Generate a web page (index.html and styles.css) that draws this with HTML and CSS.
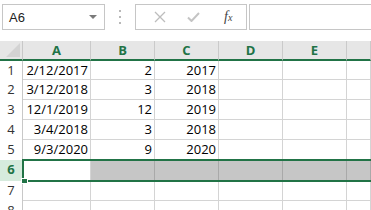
FILE: index.html
```html
<!DOCTYPE html>
<html lang="en">
<head>
    <meta charset="UTF-8">
    <title>Sheet</title>
    <link rel="stylesheet" href="styles.css">
</head>
<body>
    <div class="toolbar">
        <div class="name-box">
            <span>A6</span>
            <span class="caret"></span>
        </div>
        <div class="grip"><i></i><i></i><i></i></div>
        <div class="fx-buttons">
            <svg class="btn-icon" width="12" height="12" viewBox="0 0 12 12">
                <path d="M1 1 L11 11 M11 1 L1 11" stroke="#bdbdbd" stroke-width="1.3" fill="none"/>
            </svg>
            <svg class="btn-icon" width="13" height="10" viewBox="0 0 13 10">
                <path d="M1 5.5 L4.5 9 L12 1" stroke="#c4c4c4" stroke-width="2" fill="none"/>
            </svg>
            <span class="fx">f<small>x</small></span>
        </div>
        <div class="formula"></div>
    </div>

    <div class="sheet">
        <div class="corner"><span class="corner-tri"></span></div>
        <div class="col-head">A</div>
        <div class="col-head">B</div>
        <div class="col-head">C</div>
        <div class="col-head">D</div>
        <div class="col-head">E</div>
        <div class="col-head"></div>

        <div class="row-head">1</div>
        <div class="cell">2/12/2017</div><div class="cell">2</div><div class="cell">2017</div><div class="cell"></div><div class="cell"></div><div class="cell"></div>

        <div class="row-head">2</div>
        <div class="cell">3/12/2018</div><div class="cell">3</div><div class="cell">2018</div><div class="cell"></div><div class="cell"></div><div class="cell"></div>

        <div class="row-head">3</div>
        <div class="cell">12/1/2019</div><div class="cell">12</div><div class="cell">2019</div><div class="cell"></div><div class="cell"></div><div class="cell"></div>

        <div class="row-head">4</div>
        <div class="cell">3/4/2018</div><div class="cell">3</div><div class="cell">2018</div><div class="cell"></div><div class="cell"></div><div class="cell"></div>

        <div class="row-head">5</div>
        <div class="cell">9/3/2020</div><div class="cell">9</div><div class="cell">2020</div><div class="cell"></div><div class="cell"></div><div class="cell"></div>

        <div class="row-head active">6</div>
        <div class="cell"></div><div class="cell picked"></div><div class="cell picked"></div><div class="cell picked"></div><div class="cell picked"></div><div class="cell picked"></div>

        <div class="row-head">7</div>
        <div class="cell"></div><div class="cell"></div><div class="cell"></div><div class="cell"></div><div class="cell"></div><div class="cell"></div>

        <div class="row-head">8</div>
        <div class="cell"></div><div class="cell"></div><div class="cell"></div><div class="cell"></div><div class="cell"></div><div class="cell"></div>

        <div class="selection"><span class="handle"></span></div>
    </div>
</body>
</html>
```

FILE: styles.css
```css
* {
    margin: 0;
    padding: 0;
    box-sizing: border-box;
}

body {
    background: #ffffff;
    font-family: "Open Sans", "Liberation Sans", sans-serif;
    overflow: hidden;
    width: 371px;
    height: 210px;
}

/* formula bar */

.toolbar {
    height: 41px;
    display: flex;
    align-items: flex-start;
    padding: 4px 0 0 2px;
}

.name-box {
    width: 103px;
    height: 26px;
    border: 1px solid #c6c6c6;
    display: flex;
    align-items: center;
    justify-content: space-between;
    padding: 0 7px 0 6px;
    font-family: "Liberation Sans", sans-serif;
    font-size: 13px;
    color: #222;
}

.caret {
    width: 0;
    height: 0;
    border-left: 4px solid transparent;
    border-right: 4px solid transparent;
    border-top: 4px solid #7a7a7a;
}

.grip {
    width: 30px;
    height: 26px;
    display: flex;
    flex-direction: column;
    align-items: center;
    justify-content: center;
    gap: 4px;
}

.grip i {
    width: 2px;
    height: 2px;
    background: #b8b8b8;
}

.fx-buttons {
    width: 112px;
    height: 26px;
    border: 1px solid #c6c6c6;
    display: flex;
    align-items: center;
    padding-left: 18px;
    gap: 21px;
}

.btn-icon {
    display: block;
}

.fx {
    font-family: "Liberation Serif", serif;
    font-style: italic;
    font-size: 14px;
    color: #444;
    margin-left: 3px;
}

.fx small {
    font-size: 10px;
}

.formula {
    flex: 1;
    height: 26px;
    margin-left: 2px;
    border: 1px solid #c6c6c6;
    border-right: none;
}

/* grid */

.sheet {
    position: relative;
    display: grid;
    grid-template-columns: 23px 68px 64px 64px 64px 64px 1fr;
    grid-template-rows: 20px 19px 20px 20px 20px 20px 21px 20px 20px;
    font-size: 13px;
    color: #000;
}

.corner {
    position: relative;
    background: #e6e6e6;
    border-right: 1px solid #c8c8c8;
    border-bottom: 2px solid #217346;
}

.corner-tri {
    position: absolute;
    right: 2px;
    bottom: 2px;
    width: 0;
    height: 0;
    border-left: 14px solid transparent;
    border-bottom: 14px solid #d3d3d3;
}

.col-head {
    background: #e6e6e6;
    border-right: 1px solid #cacaca;
    border-bottom: 2px solid #217346;
    color: #217346;
    font-weight: bold;
    text-align: center;
    line-height: 18px;
}

.row-head {
    border-right: 1px solid #c8c8c8;
    color: #333;
    text-align: center;
    line-height: 19px;
}

.row-head.active {
    background: #d6ebdd;
    color: #217346;
    font-weight: bold;
}

.cell {
    border-right: 1px solid #d4d4d4;
    border-bottom: 1px solid #d4d4d4;
    text-align: right;
    padding-right: 2px;
    line-height: 19px;
    white-space: nowrap;
}

.cell.picked {
    background: #c6c6c6;
    border-right-color: #a9a9a9;
}

.selection {
    position: absolute;
    left: 22px;
    right: -4px;
    top: 118px;
    height: 23px;
    border: 2px solid #217346;
}

.handle {
    position: absolute;
    left: -3px;
    bottom: -4px;
    width: 7px;
    height: 6px;
    background: #217346;
    border: 1px solid #fff;
}
```
